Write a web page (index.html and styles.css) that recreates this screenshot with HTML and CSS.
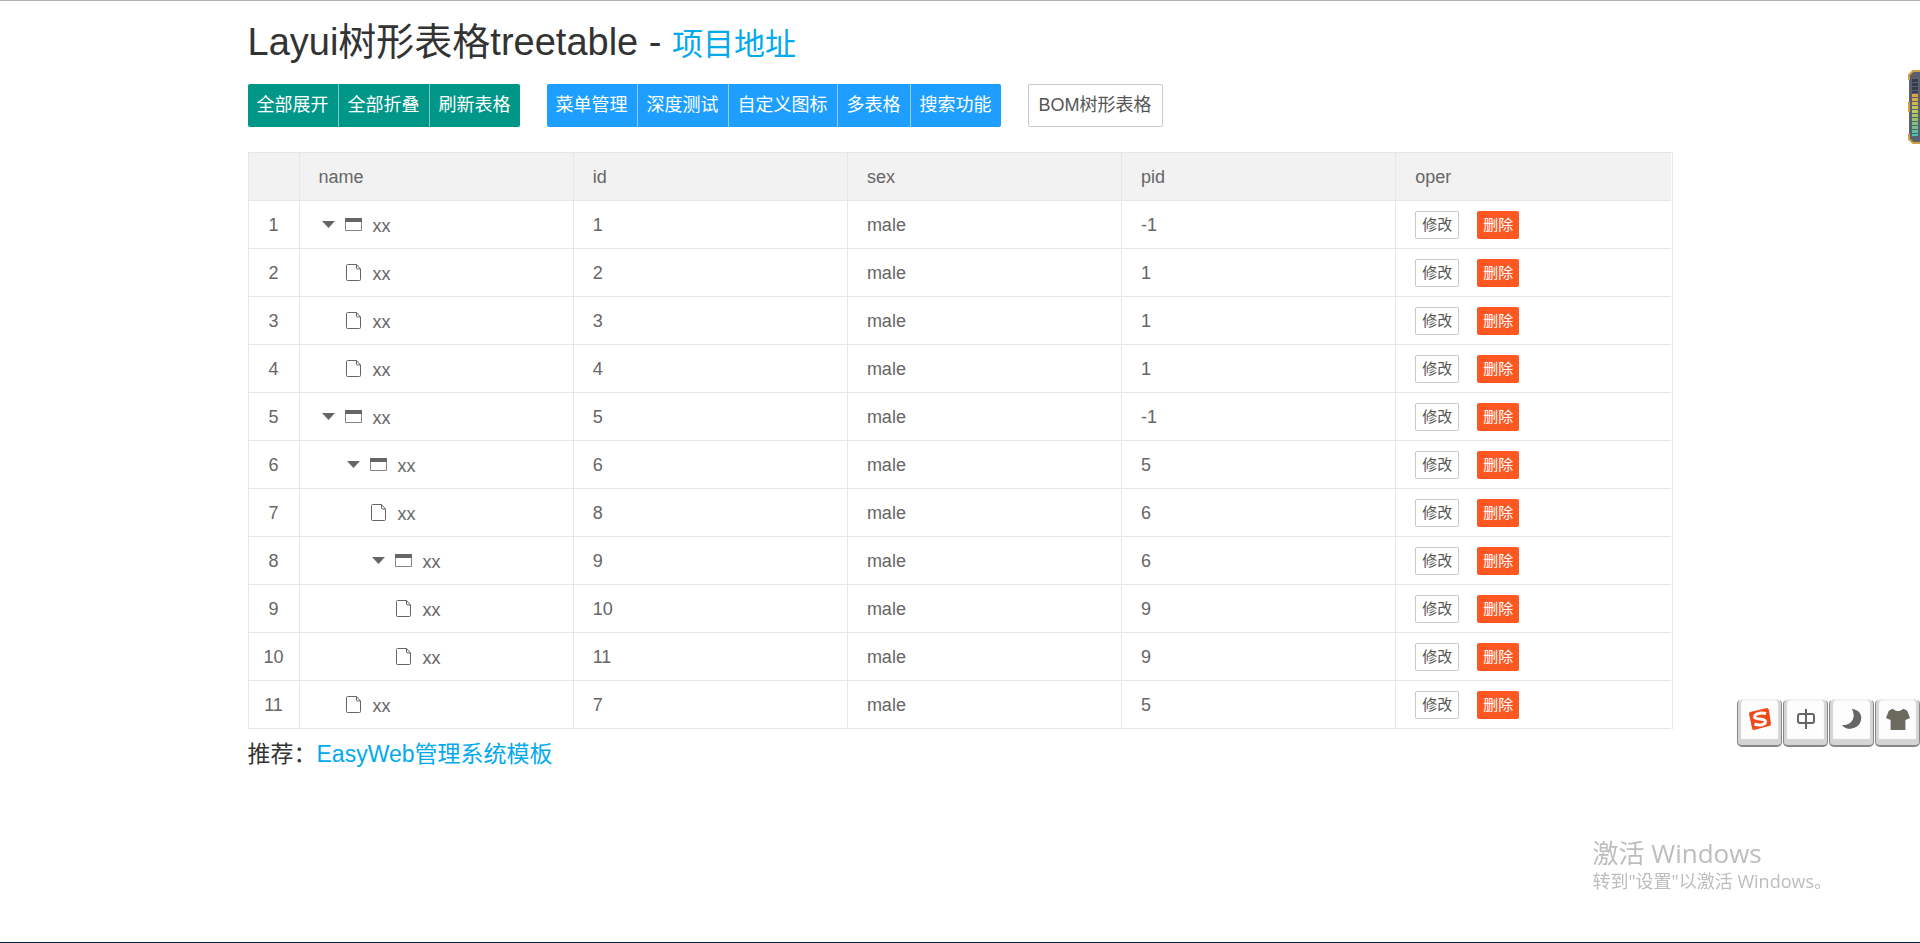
FILE: index.html
```html
<!DOCTYPE html>
<html lang="zh-CN">
<head>
    <meta charset="UTF-8">
    <meta name="viewport" content="width=device-width, initial-scale=1.0">
    <title>Layui树形表格treetable</title>
    <link rel="stylesheet" href="styles.css">
</head>
<body>
    <svg class="sprite" aria-hidden="true">
        <symbol id="arrow" viewBox="0 0 13 7"><path d="M0 0h13L6.500 7z" fill="currentColor"/></symbol>
        <symbol id="folder" viewBox="0 0 17 13"><path d="M.5.5h16v12H.5z" fill="none" stroke="currentColor" stroke-opacity=".8"/><path d="M0 0h17v4H0z" fill="currentColor"/></symbol>
        <symbol id="file" viewBox="0 0 17 17"><path d="M2.500.5h9l4 4.500v10.500a1 1 0 0 1-1 1h-12a1 1 0 0 1-1-1v-14a1 1 0 0 1 1-1zM11.500.5v3.500a1 1 0 0 0 1 1h3" fill="none" stroke="currentColor"/></symbol>
    </svg>

    <div class="container">
        <h1>Layui树形表格treetable - <a href="#">项目地址</a></h1>

        <div class="toolbar">
            <div class="btn-group">
                <button class="btn" type="button">全部展开</button>
                <button class="btn" type="button">全部折叠</button>
                <button class="btn" type="button">刷新表格</button>
            </div>
            <div class="btn-group">
                <a class="btn btn-normal" href="#">菜单管理</a>
                <a class="btn btn-normal" href="#">深度测试</a>
                <a class="btn btn-normal" href="#">自定义图标</a>
                <a class="btn btn-normal" href="#">多表格</a>
                <a class="btn btn-normal" href="#">搜索功能</a>
            </div>
            <a class="btn btn-primary" href="#">BOM树形表格</a>
        </div>

        <div class="table-box">
            <table class="tree-table">
                <thead>
                    <tr><th class="num"></th><th>name</th><th>id</th><th>sex</th><th>pid</th><th>oper</th></tr>
                </thead>
                <tbody>
                    <tr>
                        <td class="num">1</td>
                        <td><div class="tree"><button class="toggle" type="button" aria-label="折叠"><svg><use href="#arrow"/></svg></button><svg class="icon"><use href="#folder"/></svg><span>xx</span></div></td>
                        <td>1</td><td>male</td><td>-1</td>
                        <td><div class="oper"><button class="btn-xs btn-edit" type="button">修改</button><button class="btn-xs btn-del" type="button">删除</button></div></td>
                    </tr>
                    <tr>
                        <td class="num">2</td>
                        <td><div class="tree level-1"><svg class="icon"><use href="#file"/></svg><span>xx</span></div></td>
                        <td>2</td><td>male</td><td>1</td>
                        <td><div class="oper"><button class="btn-xs btn-edit" type="button">修改</button><button class="btn-xs btn-del" type="button">删除</button></div></td>
                    </tr>
                    <tr>
                        <td class="num">3</td>
                        <td><div class="tree level-1"><svg class="icon"><use href="#file"/></svg><span>xx</span></div></td>
                        <td>3</td><td>male</td><td>1</td>
                        <td><div class="oper"><button class="btn-xs btn-edit" type="button">修改</button><button class="btn-xs btn-del" type="button">删除</button></div></td>
                    </tr>
                    <tr>
                        <td class="num">4</td>
                        <td><div class="tree level-1"><svg class="icon"><use href="#file"/></svg><span>xx</span></div></td>
                        <td>4</td><td>male</td><td>1</td>
                        <td><div class="oper"><button class="btn-xs btn-edit" type="button">修改</button><button class="btn-xs btn-del" type="button">删除</button></div></td>
                    </tr>
                    <tr>
                        <td class="num">5</td>
                        <td><div class="tree"><button class="toggle" type="button" aria-label="折叠"><svg><use href="#arrow"/></svg></button><svg class="icon"><use href="#folder"/></svg><span>xx</span></div></td>
                        <td>5</td><td>male</td><td>-1</td>
                        <td><div class="oper"><button class="btn-xs btn-edit" type="button">修改</button><button class="btn-xs btn-del" type="button">删除</button></div></td>
                    </tr>
                    <tr>
                        <td class="num">6</td>
                        <td><div class="tree level-1"><button class="toggle" type="button" aria-label="折叠"><svg><use href="#arrow"/></svg></button><svg class="icon"><use href="#folder"/></svg><span>xx</span></div></td>
                        <td>6</td><td>male</td><td>5</td>
                        <td><div class="oper"><button class="btn-xs btn-edit" type="button">修改</button><button class="btn-xs btn-del" type="button">删除</button></div></td>
                    </tr>
                    <tr>
                        <td class="num">7</td>
                        <td><div class="tree level-2"><svg class="icon"><use href="#file"/></svg><span>xx</span></div></td>
                        <td>8</td><td>male</td><td>6</td>
                        <td><div class="oper"><button class="btn-xs btn-edit" type="button">修改</button><button class="btn-xs btn-del" type="button">删除</button></div></td>
                    </tr>
                    <tr>
                        <td class="num">8</td>
                        <td><div class="tree level-2"><button class="toggle" type="button" aria-label="折叠"><svg><use href="#arrow"/></svg></button><svg class="icon"><use href="#folder"/></svg><span>xx</span></div></td>
                        <td>9</td><td>male</td><td>6</td>
                        <td><div class="oper"><button class="btn-xs btn-edit" type="button">修改</button><button class="btn-xs btn-del" type="button">删除</button></div></td>
                    </tr>
                    <tr>
                        <td class="num">9</td>
                        <td><div class="tree level-3"><svg class="icon"><use href="#file"/></svg><span>xx</span></div></td>
                        <td>10</td><td>male</td><td>9</td>
                        <td><div class="oper"><button class="btn-xs btn-edit" type="button">修改</button><button class="btn-xs btn-del" type="button">删除</button></div></td>
                    </tr>
                    <tr>
                        <td class="num">10</td>
                        <td><div class="tree level-3"><svg class="icon"><use href="#file"/></svg><span>xx</span></div></td>
                        <td>11</td><td>male</td><td>9</td>
                        <td><div class="oper"><button class="btn-xs btn-edit" type="button">修改</button><button class="btn-xs btn-del" type="button">删除</button></div></td>
                    </tr>
                    <tr>
                        <td class="num">11</td>
                        <td><div class="tree level-1"><svg class="icon"><use href="#file"/></svg><span>xx</span></div></td>
                        <td>7</td><td>male</td><td>5</td>
                        <td><div class="oper"><button class="btn-xs btn-edit" type="button">修改</button><button class="btn-xs btn-del" type="button">删除</button></div></td>
                    </tr>
                </tbody>
            </table>
        </div>

        <p class="recommend">推荐：<a href="#">EasyWeb管理系统模板</a></p>
    </div>

    <!-- desktop widgets floating over the page -->
    <svg class="gauge" viewBox="0 0 12 74" aria-hidden="true">
        <defs>
            <linearGradient id="level" x1="0" y1="0" x2="0" y2="1">
                <stop offset="0" stop-color="#e0a040"/>
                <stop offset=".4" stop-color="#c0cc58"/>
                <stop offset=".7" stop-color="#7cc476"/>
                <stop offset="1" stop-color="#48c4b4"/>
            </linearGradient>
        </defs>
        <path d="M12 1H5L1 5v64l4 4h7z" fill="#5a6070"/>
        <path d="M12 1H5L1 5v5M1 64v5l4 4h7M1 32v10" fill="none" stroke="#d0a040" stroke-width="2"/>
        <path d="M7 9v14" stroke="#383c48" stroke-width="6" stroke-dasharray="3 1"/>
        <path d="M4 24h6v42H4z" fill="url(#level)"/>
        <path d="M7 27v39" stroke="#5a6070" stroke-width="6" stroke-dasharray="1 3"/>
    </svg>

    <div class="ime">
        <button class="key" type="button" aria-label="输入法">
            <svg viewBox="0 0 24 24"><path d="M2 5l17-4q1 0 2 2l2 14q0 2-2 2L6 23q-2 0-2-2L1 7q0-2 1-2z" fill="#f04a1c"/><path d="M18 6.500C12 5 6.500 7 6.500 10s11 1 11 4.500-6 4.500-11 2.500" fill="none" stroke="#fff" stroke-width="3"/></svg>
        </button>
        <button class="key" type="button" aria-label="中文">
            <svg viewBox="0 0 24 24"><rect x="4" y="7" width="16" height="9" rx="2" fill="none" stroke="#666" stroke-width="2"/><path d="M12 2v20" stroke="#666" stroke-width="2"/></svg>
        </button>
        <button class="key" type="button" aria-label="夜间">
            <svg viewBox="0 0 24 24"><path d="M12 2a10 10 0 1 1-10 16C12 20 17 10 12 2z" fill="#666"/><path d="M12 2c9 1 11 8 8 14S7 23 2 18c9 1 15-7 10-16z" fill="#666"/></svg>
        </button>
        <button class="key" type="button" aria-label="皮肤">
            <svg viewBox="0 0 26 24"><path d="M7 1q6 5 12 0l4 2 3 8-5 2v11H5V13l-5-2 3-8z" fill="#6b6a5e"/></svg>
        </button>
    </div>

    <div class="watermark">
        <p class="watermark-title">激活 Windows</p>
        <p class="watermark-text">转到"设置"以激活 Windows。</p>
    </div>
</body>
</html>
```
FILE: styles.css
```css
* {
    box-sizing: border-box;
}

body {
    margin: 0;
    min-height: 100vh;
    border-top: 1px solid #b0b0b0;
    border-bottom: 1px solid #06213a;
    background-color: #fff;
    color: #333;
    font-family: "Liberation Sans", Arial, "Noto Sans CJK SC", sans-serif;
    font-size: 18px;
    overflow-x: hidden;
}

a {
    color: #01aaed;
    text-decoration: none;
}

button {
    font-family: inherit;
    cursor: pointer;
}

.sprite {
    display: none;
}

.container {
    max-width: 1463px;
    margin: 0 auto;
    padding: 18px 19px 0;
}

h1 {
    margin: 0 0 16px;
    font-size: 38px;
    font-weight: 400;
    line-height: 46px;
}

h1 a {
    font-size: 31px;
}

/* toolbar */
.toolbar {
    display: flex;
    gap: 27px;
    margin-bottom: 25px;
}

.btn-group {
    display: flex;
}

.btn {
    height: 43px;
    padding: 0 9px;
    border: 0;
    background-color: #009688;
    color: #fff;
    font-size: 18px;
    line-height: 43px;
    white-space: nowrap;
}

.btn-group .btn + .btn {
    border-left: 1px solid rgba(255, 255, 255, 0.5);
}

.btn-group .btn:first-child {
    border-radius: 2px 0 0 2px;
}

.btn-group .btn:last-child {
    border-radius: 0 2px 2px 0;
}

.btn-normal {
    background-color: #1e9fff;
}

.btn-primary {
    padding: 0 10px;
    border: 1px solid #c9c9c9;
    border-radius: 2px;
    background-color: #fff;
    color: #555;
    line-height: 41px;
}

/* tree table */
.table-box {
    padding-right: 1px;
    border: 1px solid #e6e6e6;
    border-bottom: 0;
}

.tree-table {
    width: 100%;
    table-layout: fixed;
    border-collapse: separate;
    border-spacing: 0;
    color: #666;
}

th,
td {
    height: 48px;
    padding: 0 19px;
    border-right: 1px solid #e6e6e6;
    border-bottom: 1px solid #e6e6e6;
    font-weight: 400;
    text-align: left;
    line-height: 24px;
}

th:last-child,
td:last-child {
    border-right: 0;
}

th {
    background-color: #f2f2f2;
}

.num {
    width: 51px;
    padding: 0;
    text-align: center;
}

.tree {
    display: flex;
    align-items: center;
}

.tree span {
    padding-top: 3px;
}

.level-1 {
    padding-left: 25px;
}

.level-2 {
    padding-left: 50px;
}

.level-3 {
    padding-left: 75px;
}

.toggle {
    display: flex;
    width: 25px;
    padding: 0 0 0 3px;
    border: 0;
    background: none;
    color: #666;
}

.toggle svg {
    width: 13px;
    height: 7px;
}

.icon {
    width: 17px;
    height: 17px;
    margin: 0 11px 0 1px;
}

.oper {
    display: flex;
    gap: 18px;
    padding-top: 1px;
}

.btn-xs {
    height: 28px;
    padding: 0 6px;
    border: 0;
    border-radius: 2px;
    font-size: 15px;
    line-height: 26px;
}

.btn-edit {
    border: 1px solid #c9c9c9;
    background-color: #fff;
    color: #555;
}

.btn-del {
    background-color: #ff5722;
    color: #fff;
}

.recommend {
    margin: 10px 0 0;
    font-size: 23px;
    line-height: 30px;
}

/* floating widgets */
.gauge {
    position: fixed;
    top: 70px;
    right: 0;
    width: 12px;
    height: 74px;
}

.ime {
    position: fixed;
    top: 699px;
    right: 0;
    display: flex;
    gap: 1px;
}

.key {
    display: flex;
    justify-content: center;
    width: 45px;
    height: 48px;
    padding: 7px 0 0;
    border: 1px solid #888;
    border-top-color: #eee;
    border-bottom-width: 2px;
    border-radius: 5px;
    background-color: #fdfdfd;
    box-shadow: inset 3px 0 1px #d4d4d4, inset -3px 0 1px #d4d4d4, inset 0 -6px 1px #d4d4d4;
}

.key svg {
    width: 24px;
    height: 24px;
}

.watermark {
    position: fixed;
    right: 88px;
    bottom: 50px;
    color: #bdbdbd;
    font-family: "Open Sans", "Noto Sans CJK SC", sans-serif;
}

.watermark p {
    margin: 0;
}

.watermark-title {
    font-size: 26px;
    line-height: 32px;
}

.watermark-text {
    font-size: 18px;
    line-height: 24px;
}
```
